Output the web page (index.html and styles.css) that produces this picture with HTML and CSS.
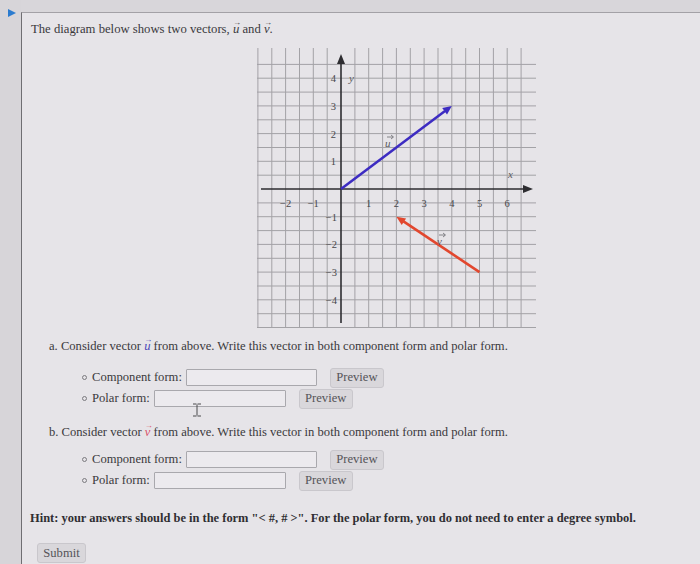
FILE: index.html
```html
<!DOCTYPE html>
<html lang="en">
<head>
<meta charset="utf-8">
<title>Vectors</title>
<link rel="stylesheet" href="styles.css">
</head>
<body>
<div class="screen">
  <div class="gutter"><span class="marker"></span></div>
  <main class="panel">
    <p class="intro">The diagram below shows two vectors, <span class="vec">u</span> and <span class="vec">v</span>.</p>
    <div class="figure">
      <svg class="graph" width="280" height="281" viewBox="0 0 280 281" xmlns="http://www.w3.org/2000/svg">
        <path class="grid" d="M0.9 0V280M14.8 0V280M28.6 0V280M42.5 0V280M56.3 0V280M70.2 0V280M97.9 0V280M111.7 0V280M125.6 0V280M139.4 0V280M153.3 0V280M167.1 0V280M181 0V280M194.8 0V280M208.7 0V280M222.5 0V280M236.4 0V280M250.2 0V280M264.1 0V280M0 16.4H279M0 30.2H279M0 44.1H279M0 57.9H279M0 71.8H279M0 85.6H279M0 99.5H279M0 113.3H279M0 127.2H279M0 154.9H279M0 168.7H279M0 182.6H279M0 196.4H279M0 210.3H279M0 224.1H279M0 238H279M0 251.8H279M0 265.7H279M0 279.5H279"/>
        <path class="axis" d="M4 141H268M84 275V14"/>
        <polygon class="axis-head" points="276,141 266,137 266,145"/>
        <polygon class="axis-head" points="84,6 80,16 88,16"/>
        <g class="ticks-x">
          <text x="28.6" y="159">−2</text>
          <text x="56.3" y="159">−1</text>
          <text x="111.7" y="159">1</text>
          <text x="139.4" y="159">2</text>
          <text x="167.1" y="159">3</text>
          <text x="194.8" y="159">4</text>
          <text x="222.5" y="159">5</text>
          <text x="250.2" y="159">6</text>
        </g>
        <g class="ticks-y">
          <text x="79" y="34">4</text>
          <text x="79" y="62">3</text>
          <text x="79" y="89.5">2</text>
          <text x="79" y="117">1</text>
          <text x="80" y="172.5">−1</text>
          <text x="80" y="200">−2</text>
          <text x="80" y="228">−3</text>
          <text x="80" y="255.5">−4</text>
        </g>
        <text class="axis-name" x="92" y="34">y</text>
        <text class="axis-name" x="251" y="130">x</text>
        <line class="vec-u-line" x1="84" y1="141" x2="188" y2="63"/>
        <polygon class="vec-u-head" points="194.8,57.9 190,66.5 185.2,60.1"/>
        <line class="vec-v-line" x1="222.5" y1="224.1" x2="146.5" y2="173.4"/>
        <polygon class="vec-v-head" points="139.4,168.7 149.1,170.4 144.7,177"/>
        <text class="vec-name" x="128" y="99">u</text>
        <path class="vec-name-arrow" d="M130 89H136M134 87L136.5 89L134 91"/>
        <text class="vec-name" x="180" y="197">v</text>
        <path class="vec-name-arrow" d="M182 187H188M186 185L188.5 187L186 189"/>
      </svg>
    </div>

    <section class="part">
      <p class="prompt">a. Consider vector <span class="vec vec-u">u</span> from above. Write this vector in both component form and polar form.</p>
      <ul class="fields">
        <li class="field"><label class="field-label">Component form:</label><input class="answer" type="text"><button class="preview" type="button">Preview</button></li>
        <li class="field"><label class="field-label">Polar form:</label><input class="answer answer-wide" type="text"><button class="preview" type="button">Preview</button></li>
      </ul>
    </section>

    <section class="part part-b">
      <p class="prompt">b. Consider vector <span class="vec vec-v">v</span> from above. Write this vector in both component form and polar form.</p>
      <ul class="fields">
        <li class="field"><label class="field-label">Component form:</label><input class="answer" type="text"><button class="preview" type="button">Preview</button></li>
        <li class="field"><label class="field-label">Polar form:</label><input class="answer answer-wide" type="text"><button class="preview" type="button">Preview</button></li>
      </ul>
    </section>

    <p class="hint">Hint: your answers should be in the form "&lt; #, # &gt;". For the polar form, you do not need to enter a degree symbol.</p>
    <button class="submit" type="button">Submit</button>

    <svg class="cursor" width="12" height="14" viewBox="0 0 12 14" xmlns="http://www.w3.org/2000/svg">
      <path d="M2 1H5.5M6.5 1H10M6 1.5V12.5M2 13H5.5M6.5 13H10" fill="none" stroke="#4a4a4c" stroke-width="1"/>
    </svg>
  </main>
</div>
</body>
</html>
```
FILE: styles.css
```css
html, body {
  margin: 0;
  padding: 0;
}

body {
  background: #d8d6da;
  font-family: "Liberation Serif", "Times New Roman", serif;
  color: #3a393c;
}

.screen {
  display: flex;
  width: 700px;
  height: 564px;
  overflow: hidden;
}

.gutter {
  width: 21px;
  flex: none;
  background: #d7d5d9;
}

.marker {
  display: block;
  width: 0;
  height: 0;
  margin: 9px 0 0 8px;
  border-left: 8px solid #2b7bcf;
  border-top: 4.5px solid transparent;
  border-bottom: 4.5px solid transparent;
}

.panel {
  flex: 1;
  position: relative;
  margin-top: 12px;
  padding: 8px 0 0 9px;
  border-left: 1px solid #6f6e72;
  border-top: 1px solid #a3a1a6;
  background: #e6e4e8;
}

.intro {
  margin: 0;
  font-size: 12.7px;
  line-height: 16px;
}

.vec {
  position: relative;
  font-style: italic;
}

.vec::before {
  content: "\2192";
  position: absolute;
  left: 0;
  top: -7px;
  font-size: 8px;
  font-style: normal;
}

.vec-u {
  color: #4a47b8;
}

.vec-v {
  color: #d9536a;
}

.figure {
  margin: 11px 0 0 226px;
  height: 281px;
}

.graph {
  display: block;
}

.grid {
  fill: none;
  stroke: #a3a2a6;
  stroke-width: 1;
}

.axis {
  fill: none;
  stroke: #2e2d31;
  stroke-width: 1.6;
}

.axis-head {
  fill: #2e2d31;
}

.ticks-x text,
.ticks-y text {
  font-family: "Liberation Serif", "Times New Roman", serif;
  font-size: 10.5px;
  fill: #48474b;
}

.ticks-x text {
  text-anchor: middle;
}

.ticks-y text {
  text-anchor: end;
}

.axis-name,
.vec-name {
  font-family: "Liberation Serif", "Times New Roman", serif;
  font-style: italic;
  font-size: 11px;
  fill: #5a5a5e;
}

.vec-name-arrow {
  fill: none;
  stroke: #6a6a70;
  stroke-width: 0.8;
}

.vec-u-line {
  stroke: #3d2cc2;
  stroke-width: 2.6;
}

.vec-u-head {
  fill: #3d2cc2;
}

.vec-v-line {
  stroke: #e2472e;
  stroke-width: 2.6;
}

.vec-v-head {
  fill: #e2472e;
}

.part {
  margin-left: 18px;
}

.prompt {
  margin: 9px 0 0;
  font-size: 12.6px;
  line-height: 16px;
}

.part-b .prompt {
  margin-top: 15px;
}

.fields {
  list-style: none;
  margin: 13px 0 0;
  padding: 0 0 0 33px;
}

.part-b .fields {
  margin-top: 9px;
}

.field {
  display: flex;
  align-items: center;
  height: 21px;
  font-size: 12.6px;
}

.field::before {
  content: "";
  width: 3px;
  height: 3px;
  margin-right: 5px;
  border: 1px solid #7b7a7f;
  border-radius: 50%;
}

.answer {
  width: 131px;
  height: 17px;
  margin: 0 0 0 4px;
  padding: 0;
  box-sizing: border-box;
  border: 1px solid #a9a8ad;
  border-radius: 1px;
  background: #eceaee;
}

.answer-wide {
  width: 132px;
}

.preview,
.submit {
  height: 20px;
  padding: 0;
  box-sizing: border-box;
  border: 1px solid #c9c7cc;
  border-radius: 3px;
  background: #d9d7db;
  font-family: "Liberation Serif", "Times New Roman", serif;
  font-size: 12.6px;
  color: #555458;
}

.preview {
  width: 54px;
  margin-left: 13px;
}

.hint {
  margin: 19px 0 0 -1px;
  font-size: 12.45px;
  line-height: 16px;
  font-weight: bold;
  color: #2f2e32;
}

.submit {
  display: block;
  width: 49px;
  margin: 17px 0 0 6px;
}

.cursor {
  position: absolute;
  left: 169px;
  top: 390px;
}
```
